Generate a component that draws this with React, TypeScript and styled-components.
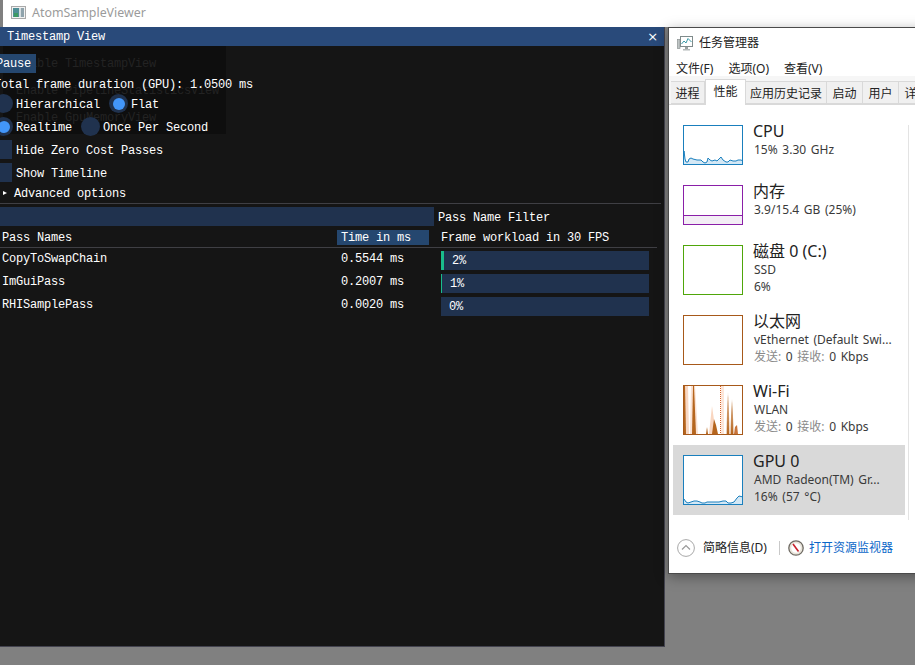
import React from 'react'
import styled, { createGlobalStyle } from 'styled-components'

const GlobalStyle = createGlobalStyle`
	html, body {
		margin: 0;
		padding: 0;
		width: 915px;
		height: 665px;
		overflow: hidden;
		background: #808080;
	}
	* {
		box-sizing: border-box;
	}
`

const Desktop = styled.div`
	position: relative;
	width: 915px;
	height: 665px;
	padding-left: 3px;
	overflow: hidden;
	background: #808080;
`

const AppFrame = styled.div`
	position: relative;
	width: 912px;
	height: 665px;
`

const AppTitleBar = styled.div`
	display: flex;
	align-items: center;
	gap: 6px;
	height: 27px;
	padding: 0 0 3px 8px;
	background: #fff;
	color: #9b9b9b;
	font: 12.4px 'Noto Sans', sans-serif;
`

const ImGuiWindow = styled.div`
	position: absolute;
	left: -18px;
	top: 27px;
	width: 680px;
	height: 620px;
	display: flex;
	flex-direction: column;
	border: 1px solid #43434f;
	border-top: 0;
	background: #151515;
	color: #fff;
	font: 12px/14px 'Liberation Mono', monospace;
	letter-spacing: -0.2px;
`

const ImGuiTitle = styled.div`
	display: flex;
	align-items: center;
	justify-content: space-between;
	height: 19px;
	padding: 0 6px 0 21px;
	background: #294a7a;
	flex: none;
`

const CloseMark = styled.span`
	font: 13px/19px 'DejaVu Sans', sans-serif;
`

const ImGuiBody = styled.div`
	position: relative;
	flex: 1;
	padding: 8px 3px 0 8px;
`

const GhostPanel = styled.div`
	position: absolute;
	left: 17px;
	top: 0;
	width: 223px;
	height: 88px;
	padding: 11px 0 0 13px;
	display: flex;
	flex-direction: column;
	gap: 13px;
	background: #0e0e0e;
	color: #232323;
`

const Controls = styled.div`
	position: relative;
	display: flex;
	flex-direction: column;
	gap: 4px;
`

const PauseButton = styled.div`
	align-self: flex-start;
	height: 19px;
	padding: 0 5px 0 2px;
	line-height: 21px;
	background: #25476f;
`

const FrameLine = styled.div`
	height: 13px;
	line-height: 16px;
	white-space: nowrap;
`

const OptionRow = styled.div`
	display: flex;
	align-items: center;
	height: 19px;
`

const RadioFrame = styled.span<{ $on?: boolean }>`
	display: flex;
	align-items: center;
	justify-content: center;
	width: 19px;
	height: 19px;
	margin-right: 3px;
	border-radius: 50%;
	background: #20324e;
	flex: none;
	&::after {
		content: '';
		display: ${p => (p.$on ? 'block' : 'none')};
		width: 12px;
		height: 12px;
		border-radius: 50%;
		background: #4296fa;
	}
`

const OptionLabel = styled.span`
	margin: 2px 9px 0 0;
`

const CheckBox = styled.span`
	width: 18px;
	height: 19px;
	margin-right: 4px;
	background: #20324e;
	flex: none;
`

const TreeRow = styled.div`
	display: flex;
	align-items: center;
	height: 14px;
`

const TreeArrow = styled.span`
	width: 0;
	height: 0;
	margin: 0 7px 0 9px;
	border-left: 4px solid #fff;
	border-top: 2.5px solid transparent;
	border-bottom: 2.5px solid transparent;
`

const Rule = styled.div`
	height: 1px;
	margin: -1px 0;
	background: #3f3f44;
`

const FilterRow = styled.div`
	display: flex;
	align-items: center;
	gap: 4px;
	height: 19px;
`

const FilterInput = styled.div`
	width: 440px;
	height: 19px;
	background: #20324e;
`

const PassTable = styled.div`
	width: 663px;
`

const PassGrid = styled.div`
	display: grid;
	grid-template-columns: 343px 104px 208px;
	row-gap: 4px;
`

const HeaderCell = styled.div<{ $active?: boolean; $pad?: number }>`
	height: 15px;
	width: ${p => (p.$active ? '92px' : 'auto')};
	padding-left: ${p => p.$pad ?? 0}px;
	line-height: 17px;
	background: ${p => (p.$active ? '#25476f' : 'transparent')};
	white-space: nowrap;
`

const TableRule = styled.div`
	height: 1px;
	margin: 2px 0 3px;
	background: #3f3f44;
`

const NameCell = styled.div`
	padding-left: 8px;
	height: 19px;
	line-height: 17px;
`

const TimeCell = styled.div`
	padding-left: 4px;
	height: 19px;
	line-height: 17px;
`

const WorkloadBar = styled.div`
	position: relative;
	width: 208px;
	height: 19px;
	background: #20324e;
`

const WorkloadLabel = styled.span<{ $left: number }>`
	position: absolute;
	left: ${p => p.$left}px;
	top: 3px;
`

const WorkloadFill = styled.div`
	position: absolute;
	left: 0;
	top: 0;
	bottom: 0;
	background: #1abc8c;
`

const TaskWindow = styled.div`
	position: absolute;
	left: 665px;
	top: 27px;
	width: 260px;
	height: 547px;
	display: flex;
	flex-direction: column;
	border: 1px solid #4a4a4a;
	background: #fff;
	color: #222;
	box-shadow: 0 3px 12px rgba(0, 0, 0, 0.35);
	font: 12px/16px 'Noto Sans', 'Noto Sans CJK SC', sans-serif;
`

const TaskTitle = styled.div`
	display: flex;
	align-items: center;
	gap: 6px;
	height: 28px;
	padding: 2px 0 0 8px;
	flex: none;
`

const MenuBar = styled.div`
	display: flex;
	gap: 15px;
	height: 20px;
	padding: 5px 0 0 7px;
	flex: none;
`

const TabStrip = styled.div`
	display: flex;
	align-items: flex-end;
	height: 29px;
	padding-left: 2px;
	border-bottom: 1px solid #d9d9d9;
	background: #f6f6f6;
	flex: none;
`

const Tab = styled.div<{ $active?: boolean; $width: number }>`
	width: ${p => p.$width}px;
	height: ${p => (p.$active ? 26 : 23)}px;
	margin-bottom: ${p => (p.$active ? -1 : 0)}px;
	line-height: ${p => (p.$active ? 24 : 23)}px;
	text-align: center;
	border: 1px solid #d9d9d9;
	border-left-width: ${p => (p.$active ? 1 : 0)}px;
	border-bottom: ${p => (p.$active ? '0' : '1px solid #d9d9d9')};
	background: ${p => (p.$active ? '#fff' : '#f0f0f0')};
	white-space: nowrap;
	overflow: hidden;
	flex: none;
`

const PerfPane = styled.div`
	position: relative;
	height: 415px;
	padding: 10px 0 0 4px;
	flex: none;
`

const PaneLine = styled.div`
	position: absolute;
	left: 239px;
	top: 20px;
	bottom: 0;
	width: 1px;
	background: #e3e3e3;
`

const DeviceRow = styled.div<{ $selected?: boolean; $tall?: boolean }>`
	display: flex;
	gap: 10px;
	width: 232px;
	height: ${p => (p.$tall ? 70 : 60)}px;
	padding: 10px 0 0 10px;
	background: ${p => (p.$selected ? '#d9d9d9' : 'transparent')};
`

const Thumb = styled.div<{ $color: string; $tall?: boolean }>`
	width: 60px;
	height: ${p => (p.$tall ? 50 : 40)}px;
	border: 1px solid ${p => p.$color};
	background: #fff;
	flex: none;
	svg {
		display: block;
		width: 58px;
		height: 100%;
	}
`

const DeviceText = styled.div`
	display: flex;
	flex-direction: column;
	min-width: 0;
`

const DeviceName = styled.div`
	height: 22px;
	margin-top: -6px;
	font-size: 16px;
	line-height: 24px;
`

const DeviceLine = styled.div`
	height: 17px;
	padding-left: 1px;
	color: #3a3a3a;
	font-size: 12px;
	line-height: 17px;
	word-spacing: 1.5px;
	white-space: nowrap;
`

const Muted = styled.span`
	color: #8a8a8a;
`

const TaskFooter = styled.div`
	display: flex;
	align-items: center;
	height: 26px;
	margin-top: 15px;
	padding-left: 8px;
`

const FooterLabel = styled.span`
	margin-left: 8px;
	white-space: nowrap;
`

const FooterDivider = styled.span`
	width: 1px;
	height: 14px;
	margin: 0 8px 0 12px;
	background: #c9c9c9;
`

const MonitorLink = styled.span`
	margin-left: 5px;
	color: #0a66c8;
	white-space: nowrap;
`

const passes = [
	{ name: 'CopyToSwapChain', time: '0.5544 ms', load: '2%', fill: 3, left: 11 },
	{ name: 'ImGuiPass', time: '0.2007 ms', load: '1%', fill: 1, left: 9 },
	{ name: 'RHISamplePass', time: '0.0020 ms', load: '0%', fill: 0, left: 8 },
]

const cpuLine =
	'0,38 1,26 2,34 3,37 5,37 6,34 8,33 10,34 14,35 18,35 20,37 22,38 24,37 25,33 27,35 29,36 32,35 34,36 36,34 38,32 40,35 43,37 45,37 47,35 50,36 53,36 55,35 58,35 60,36'
const gpuLine =
	'0,44 1,44 3,47 5,48 8,47 11,46 14,46 17,47 19,48 22,48 24,47 26,47 32,47 36,47 40,46 43,46 45,48 48,48 51,47 54,43 56,41 60,42'

const AreaChart = ({ points, height }: { points: string; height: number }) => (
	<svg viewBox={`1 1 58 ${height - 2}`} preserveAspectRatio='none'>
		<polygon points={`0,${height} ${points} 60,${height}`} fill='#d4e8f5' />
		<polyline points={points} fill='none' stroke='#1a7fbd' strokeWidth='1' />
	</svg>
)

const MemoryChart = () => (
	<svg viewBox='1 1 58 38' preserveAspectRatio='none'>
		<rect x='0' y='31' width='60' height='9' fill='#f3eef5' />
		<line x1='0' y1='30.5' x2='60' y2='30.5' stroke='#8a1fa8' strokeWidth='1' />
	</svg>
)

const WifiChart = () => (
	<svg viewBox='1 1 58 48' preserveAspectRatio='none'>
		<polygon points='1,49 2,0 5,0 6,49' fill='#f8d8c4' />
		<polygon points='7,49 8,0 12,0 15,49' fill='#fbe2d3' />
		<polygon points='26,49 29,21 33,49' fill='#f9d6c0' />
		<polygon points='38,49 38,1 41,1 41,49' fill='#fde6d8' />
		<polygon points='43,49 45,7 47,49' fill='#e7c7ab' />
		<polygon points='47,49 49,14 51,49' fill='#e0bb9b' />
		<polygon points='0,49 1,1 2,1 3,49' fill='#b5651d' />
		<polygon points='9,49 10,1 11,1 13,49' fill='#b5651d' />
		<polygon points='23,49 24,42 25,49' fill='#b5651d' />
		<polygon points='29,49 31,34 33,40 35,49' fill='#b5651d' />
		<polygon points='44,49 45,9 46,49' fill='#b5651d' />
		<polygon points='48,49 49,16 50,49' fill='#b5651d' />
		<polygon points='51,49 52,42 54,40 55,49' fill='#c8743a' />
		<line x1='37.5' y1='1' x2='37.5' y2='49' stroke='#d4622a' strokeWidth='1' strokeDasharray='1 1' />
	</svg>
)

const AppIcon = () => (
	<svg width='15' height='13' viewBox='0 0 15 13'>
		<rect x='0.5' y='0.5' width='14' height='12' fill='#f2f2f2' stroke='#a9a9a9' />
		<rect x='2' y='2' width='6' height='9' fill='#4f8f96' />
		<rect x='3' y='7' width='4' height='4' fill='#3e9a63' />
		<rect x='8' y='2' width='2' height='9' fill='#d5dde0' />
		<rect x='10' y='2' width='3' height='9' fill='#8fa3ac' />
	</svg>
)

const TaskIcon = () => (
	<svg width='16' height='16' viewBox='0 0 16 16' fill='none'>
		<rect x='0.5' y='4.5' width='2.5' height='9' fill='#bfc5c5' stroke='#8c9393' strokeWidth='0.7' />
		<rect x='3.5' y='1.5' width='12' height='10' fill='#fff' stroke='#7f8b8b' />
		<polyline points='4.5,9 7,6 9,8 11,3.5 14.5,7' stroke='#3a9aa8' strokeWidth='1' />
		<rect x='8' y='12' width='3' height='2' fill='#9aa1a1' />
		<rect x='6' y='14' width='7' height='1.5' fill='#b3b9b9' />
	</svg>
)

const CollapseIcon = () => (
	<svg width='18' height='18' viewBox='0 0 18 18' fill='none'>
		<circle cx='9' cy='9' r='8.4' fill='#fff' stroke='#a8a8a8' strokeWidth='1' />
		<polyline points='5,10.5 9,6.5 13,10.5' stroke='#9a9a9a' strokeWidth='1.2' />
	</svg>
)

const ResourceIcon = () => (
	<svg width='16' height='16' viewBox='0 0 16 16' fill='none'>
		<circle cx='8' cy='8' r='7.2' fill='#e9e4da' stroke='#6e6a63' strokeWidth='1.3' />
		<circle cx='8' cy='8' r='4.8' fill='#fff' />
		<line x1='5' y1='4' x2='10.5' y2='11.5' stroke='#c8202a' strokeWidth='1.6' />
	</svg>
)

const App = (): JSX.Element => {
	return (
		<>
			<GlobalStyle />
			<Desktop>
				<AppFrame>
					<AppTitleBar>
						<AppIcon />
						AtomSampleViewer
					</AppTitleBar>

					<ImGuiWindow>
						<ImGuiTitle>
							Timestamp View
							<CloseMark>×</CloseMark>
						</ImGuiTitle>
						<ImGuiBody>
							<GhostPanel>
								<span>Enable TimestampView</span>
								<span>Enable PipelineStatisticsView</span>
								<span>Enable GpuMemoryView</span>
							</GhostPanel>
							<Controls>
								<PauseButton>Pause</PauseButton>
								<FrameLine>Total frame duration (GPU): 1.0500 ms</FrameLine>
								<OptionRow>
									<RadioFrame />
									<OptionLabel>Hierarchical</OptionLabel>
									<RadioFrame $on />
									<OptionLabel>Flat</OptionLabel>
								</OptionRow>
								<OptionRow>
									<RadioFrame $on />
									<OptionLabel>Realtime</OptionLabel>
									<RadioFrame />
									<OptionLabel>Once Per Second</OptionLabel>
								</OptionRow>
								<OptionRow>
									<CheckBox />
									<OptionLabel>Hide Zero Cost Passes</OptionLabel>
								</OptionRow>
								<OptionRow>
									<CheckBox />
									<OptionLabel>Show Timeline</OptionLabel>
								</OptionRow>
								<TreeRow>
									<TreeArrow />
									<OptionLabel>Advanced options</OptionLabel>
								</TreeRow>
								<Rule />
								<FilterRow>
									<FilterInput />
									<OptionLabel>Pass Name Filter</OptionLabel>
								</FilterRow>
								<PassTable>
									<PassGrid>
										<HeaderCell $pad={8}>Pass Names</HeaderCell>
										<HeaderCell $active $pad={4}>Time in ms</HeaderCell>
										<HeaderCell>Frame workload in 30 FPS</HeaderCell>
									</PassGrid>
									<TableRule />
									<PassGrid>
										{passes.map(pass => (
											<React.Fragment key={pass.name}>
												<NameCell>{pass.name}</NameCell>
												<TimeCell>{pass.time}</TimeCell>
												<WorkloadBar>
													{pass.fill > 0 && <WorkloadFill style={{ width: pass.fill }} />}
													<WorkloadLabel $left={pass.left}>{pass.load}</WorkloadLabel>
												</WorkloadBar>
											</React.Fragment>
										))}
									</PassGrid>
								</PassTable>
							</Controls>
						</ImGuiBody>
					</ImGuiWindow>

					<TaskWindow>
						<TaskTitle>
							<TaskIcon />
							任务管理器
						</TaskTitle>
						<MenuBar>
							<span>文件(F)</span>
							<span>选项(O)</span>
							<span>查看(V)</span>
						</MenuBar>
						<TabStrip>
							<Tab $width={34}>进程</Tab>
							<Tab $active $width={41}>性能</Tab>
							<Tab $width={81}>应用历史记录</Tab>
							<Tab $width={36}>启动</Tab>
							<Tab $width={36}>用户</Tab>
							<Tab $width={60}>详细信息</Tab>
						</TabStrip>
						<PerfPane>
							<PaneLine />
							<DeviceRow>
								<Thumb $color='#1a7fbd'>
									<AreaChart points={cpuLine} height={40} />
								</Thumb>
								<DeviceText>
									<DeviceName>CPU</DeviceName>
									<DeviceLine>15% 3.30 GHz</DeviceLine>
								</DeviceText>
							</DeviceRow>
							<DeviceRow>
								<Thumb $color='#8a1fa8'>
									<MemoryChart />
								</Thumb>
								<DeviceText>
									<DeviceName>内存</DeviceName>
									<DeviceLine>3.9/15.4 GB (25%)</DeviceLine>
								</DeviceText>
							</DeviceRow>
							<DeviceRow $tall>
								<Thumb $color='#4fa60a' $tall />
								<DeviceText>
									<DeviceName>磁盘 0 (C:)</DeviceName>
									<DeviceLine>SSD</DeviceLine>
									<DeviceLine>6%</DeviceLine>
								</DeviceText>
							</DeviceRow>
							<DeviceRow $tall>
								<Thumb $color='#a7591a' $tall />
								<DeviceText>
									<DeviceName>以太网</DeviceName>
									<DeviceLine>vEthernet (Default Swi...</DeviceLine>
									<DeviceLine>
										<Muted>发送:</Muted> 0 <Muted>接收:</Muted> 0 Kbps
									</DeviceLine>
								</DeviceText>
							</DeviceRow>
							<DeviceRow $tall>
								<Thumb $color='#a7591a' $tall>
									<WifiChart />
								</Thumb>
								<DeviceText>
									<DeviceName>Wi-Fi</DeviceName>
									<DeviceLine>WLAN</DeviceLine>
									<DeviceLine>
										<Muted>发送:</Muted> 0 <Muted>接收:</Muted> 0 Kbps
									</DeviceLine>
								</DeviceText>
							</DeviceRow>
							<DeviceRow $tall $selected>
								<Thumb $color='#1a7fbd' $tall>
									<AreaChart points={gpuLine} height={50} />
								</Thumb>
								<DeviceText>
									<DeviceName>GPU 0</DeviceName>
									<DeviceLine>AMD Radeon(TM) Gr...</DeviceLine>
									<DeviceLine>16% (57 °C)</DeviceLine>
								</DeviceText>
							</DeviceRow>
						</PerfPane>
						<TaskFooter>
							<CollapseIcon />
							<FooterLabel>简略信息(D)</FooterLabel>
							<FooterDivider />
							<ResourceIcon />
							<MonitorLink>打开资源监视器</MonitorLink>
						</TaskFooter>
					</TaskWindow>
				</AppFrame>
			</Desktop>
		</>
	)
}

export default App
